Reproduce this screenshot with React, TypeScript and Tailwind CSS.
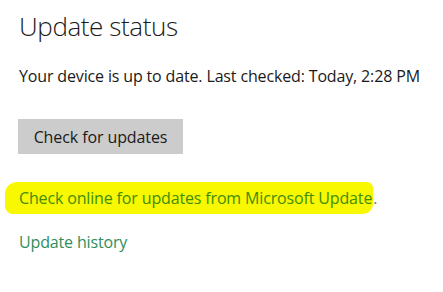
export default function App() {
  return (
    <div className="w-[443px] h-[292px] bg-white overflow-hidden font-['Open_Sans',sans-serif] text-[#1a1a1a]">
      <div className="flex flex-col pl-[19px] pt-[6px]">
        <h1 className="text-[26px] font-light leading-[40px] tracking-[-0.4px]">Update status</h1>

        <p className="mt-[20px] text-[16px] leading-[20px] tracking-[-0.15px]">
          Your device is up to date. Last checked: Today, 2:28 PM
        </p>

        <button className="mt-[33px] w-[165px] h-[35px] bg-[#cccccc] text-[16px] tracking-[-0.1px] text-[#1a1a1a] self-start -ml-px">
          Check for updates
        </button>

        <div className="mt-[28px] -ml-[14px] flex items-center">
          <span className="bg-[#f8f800] rounded-tl-[12px] rounded-bl-[8px] rounded-tr-[6px] rounded-br-[10px] pl-[14px] pr-[1px] py-[6px] text-[16px] leading-[20px] text-[#3f8e0a] tracking-[-0.15px]">
            Check online for updates from Microsoft Update
          </span>
          <span className="text-[16px] text-[#777777]">.</span>
        </div>

        <a className="mt-[18px] text-[16px] leading-[20px] text-[#2f8f5b] tracking-[-0.15px]">Update history</a>
      </div>
    </div>
  )
}
